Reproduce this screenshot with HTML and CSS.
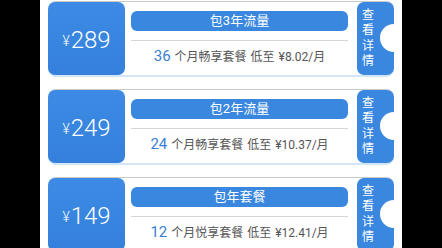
FILE: index.html
```html
<!DOCTYPE html>
<html lang="zh">
<head>
    <meta charset="UTF-8">
    <meta name="viewport" content="width=device-width, initial-scale=1.0">
    <title>流量套餐</title>
    <link rel="stylesheet" href="styles.css">
</head>
<body>
    <div class="column">
        <div class="card">
            <div class="price"><span class="yen">¥</span>289</div>
            <div class="info">
                <div class="title">包3年流量</div>
                <div class="desc"><span class="months">36</span> 个月畅享套餐 低至 ¥8.02/月</div>
            </div>
            <div class="more"><span>查看详情</span></div>
        </div>
        <div class="card">
            <div class="price"><span class="yen">¥</span>249</div>
            <div class="info">
                <div class="title">包2年流量</div>
                <div class="desc"><span class="months">24</span> 个月畅享套餐 低至 ¥10.37/月</div>
            </div>
            <div class="more"><span>查看详情</span></div>
        </div>
        <div class="card">
            <div class="price"><span class="yen">¥</span>149</div>
            <div class="info">
                <div class="title">包年套餐</div>
                <div class="desc"><span class="months">12</span> 个月悦享套餐 低至 ¥12.41/月</div>
            </div>
            <div class="more"><span>查看详情</span></div>
        </div>
    </div>
</body>
</html>
```

FILE: styles.css
```css
html, body {
    margin: 0;
    height: 100%;
    overflow: hidden;
}
body {
    background-color: #000;
    font-family: Roboto, "Noto Sans CJK SC", sans-serif;
}
.column {
    margin-left: 40px;
    width: 346px;
    height: 100%;
    background-color: #fff;
    padding: 1px 8px 0 8px;
}
.card {
    display: flex;
    height: 73px;
    border-top: 1px solid #c9c9c9;
    border-bottom: 2px solid #d3e6f7;
    border-radius: 8px;
    margin-bottom: 12px;
}
.price {
    width: 77px;
    background: linear-gradient(#3d8be4, #3480dc);
    border-radius: 7px;
    color: #fff;
    font-size: 24px;
    font-weight: 300;
    display: flex;
    align-items: center;
    justify-content: center;
    padding-top: 2px;
    box-sizing: border-box;
}
.yen {
    font-size: 14px;
    margin-right: 1px;
    margin-top: 3px;
}
.info {
    flex: 1;
    padding: 9px 9px 0 6px;
}
.title {
    height: 20px;
    line-height: 20px;
    background-color: #3a87e0;
    border-radius: 6px;
    color: #fff;
    font-size: 13px;
    text-align: center;
}
.desc {
    margin-top: 9px;
    border-top: 1px solid #d6d6d6;
    padding-top: 6px;
    text-align: center;
    color: #555;
    font-size: 12px;
    word-spacing: 1px;
    line-height: 18px;
}
.months {
    color: #3a7fd0;
    font-size: 15px;
}
.more {
    width: 37px;
    background-color: #3a87e0;
    border-radius: 7px;
    color: #fff;
    font-size: 12px;
    line-height: 15.5px;
    display: flex;
    align-items: center;
    padding-left: 5px;
    box-sizing: border-box;
    position: relative;
    overflow: hidden;
}
.more span {
    width: 12px;
}
.more::after {
    content: "";
    position: absolute;
    right: -14px;
    top: 22px;
    width: 28px;
    height: 28px;
    border-radius: 50%;
    background-color: #fff;
}
```
